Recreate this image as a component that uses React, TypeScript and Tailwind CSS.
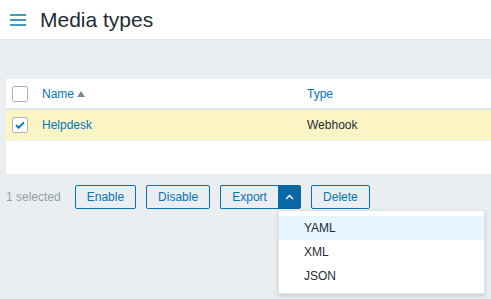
import { Fragment } from 'react';

const font = { fontFamily: '"Liberation Sans", Arial, sans-serif' };

const Checkbox = ({ checked }: { checked?: boolean }) => (
  <span className="flex h-4 w-4 items-center justify-center rounded-[2px] border border-[#a9b6bd] bg-white">
    {checked && (
      <svg width="10" height="8" viewBox="0 0 10 8" fill="none">
        <path d="M1 4.2 3.7 6.6 9 1.4" stroke="#0275b8" strokeWidth="2" />
      </svg>
    )}
  </span>
);

const OutlineButton = ({ label, className = '' }: { label: string; className?: string }) => (
  <button className={`h-6 rounded-[2px] border border-[#0275b8] bg-transparent px-[11px] text-[12px] text-[#0275b8] ${className}`}>
    {label}
  </button>
);

export default function App() {
  const formats = ['YAML', 'XML', 'JSON'];

  return (
    <div className="relative h-[299px] w-full overflow-hidden bg-[#ebeef0] text-[12px] text-[#1f2c33]" style={font}>
      <header className="flex h-10 items-center border-b border-[#dfe4e7] bg-white">
        <svg className="ml-[10px] mr-[14px]" width="16" height="12" viewBox="0 0 16 12">
          <rect y="0" width="16" height="2" fill="#4796c4" />
          <rect y="5" width="16" height="2" fill="#4796c4" />
          <rect y="10" width="16" height="2" fill="#4796c4" />
        </svg>
        <h1 className="text-[21px] leading-none text-[#1f2c33]">Media types</h1>
      </header>

      <div className="ml-[6px] mt-[39px] bg-white">
        <div className="flex h-[31px] items-center border-b-2 border-[#dfe4e7]">
          <div className="w-9 pl-[6px]">
            <Checkbox />
          </div>
          <div className="flex w-[265px] items-center text-[#0275b8]">
            Name
            <svg className="ml-[3px]" width="8" height="6" viewBox="0 0 8 6">
              <path d="M0 6 4 0 8 6Z" fill="#768d99" />
            </svg>
          </div>
          <div className="text-[#0275b8]">Type</div>
        </div>
        <div className="flex h-[31px] items-center border-b border-[#ebeef0] bg-[#fbf5c6]">
          <div className="w-9 pl-[6px]">
            <Checkbox checked />
          </div>
          <div className="w-[265px] text-[#0275b8]">Helpdesk</div>
          <div>Webhook</div>
        </div>
        <div className="h-[33px]" />
      </div>

      <div className="mt-[11px] flex items-center pl-[6px]">
        <span className="mr-[14px] text-[#8f9fa8]">1 selected</span>
        <OutlineButton label="Enable" />
        <OutlineButton label="Disable" className="ml-[10px]" />
        <div className="ml-[10px] flex">
          <OutlineButton label="Export" className="w-[58px] rounded-r-none border-r-0" />
          <button className="flex h-6 w-[23px] items-center justify-center rounded-r-[2px] bg-[#0a67a6]">
            <svg width="9" height="6" viewBox="0 0 9 6" fill="none">
              <path d="M1 5 4.5 1.5 8 5" stroke="#ffffff" strokeWidth="1.5" />
            </svg>
          </button>
        </div>
        <OutlineButton label="Delete" className="ml-[10px]" />
      </div>

      <div className="absolute left-[278px] top-[210px] w-[207px] border border-[#dfe4e7] bg-white py-[5px] shadow-[0_2px_4px_rgba(0,0,0,0.15)]">
        {formats.map((f, i) => (
          <Fragment key={f}>
            <div className={`flex h-6 items-center pl-[25px] ${i === 0 ? 'bg-[#e8f5ff]' : ''}`}>{f}</div>
          </Fragment>
        ))}
      </div>
    </div>
  );
}
